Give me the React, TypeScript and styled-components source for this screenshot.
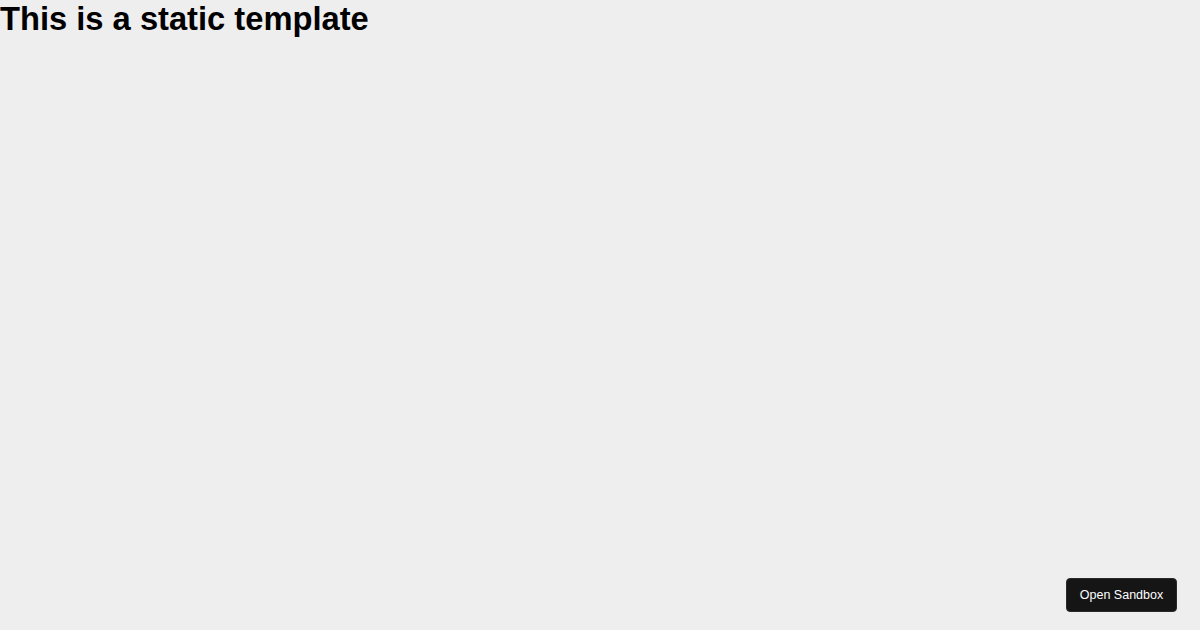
import React from "react";
import styled, { createGlobalStyle } from "styled-components";

const Global = createGlobalStyle`
  html, body {
    margin: 0;
    padding: 0;
    background: #eeeeee;
    height: 100%;
  }
  #root { min-height: 100%; }
`;

const Page = styled.div`
  min-height: 630px;
  background: #eeeeee;
  font-family: "Liberation Sans", Arial, sans-serif;
`;

const Title = styled.h1`
  margin: 0;
  font-size: 32.7px;
  line-height: 37px;
  font-weight: 700;
  color: #000;
`;

const OpenButton = styled.a`
  position: fixed;
  right: 23px;
  bottom: 18px;
  display: flex;
  align-items: center;
  justify-content: center;
  height: 34px;
  width: 111px;
  box-sizing: border-box;
  background: #151515;
  color: #ffffff;
  border-radius: 4px;
  font-family: "Liberation Sans", Arial, sans-serif;
  font-size: 12.5px;
  text-decoration: none;
  border: 1px solid #2a2a2a;
`;

export default function App() {
  return (
    <Page>
      <Global />
      <Title>This is a static template</Title>
      <OpenButton href="#">Open Sandbox</OpenButton>
    </Page>
  );
}
